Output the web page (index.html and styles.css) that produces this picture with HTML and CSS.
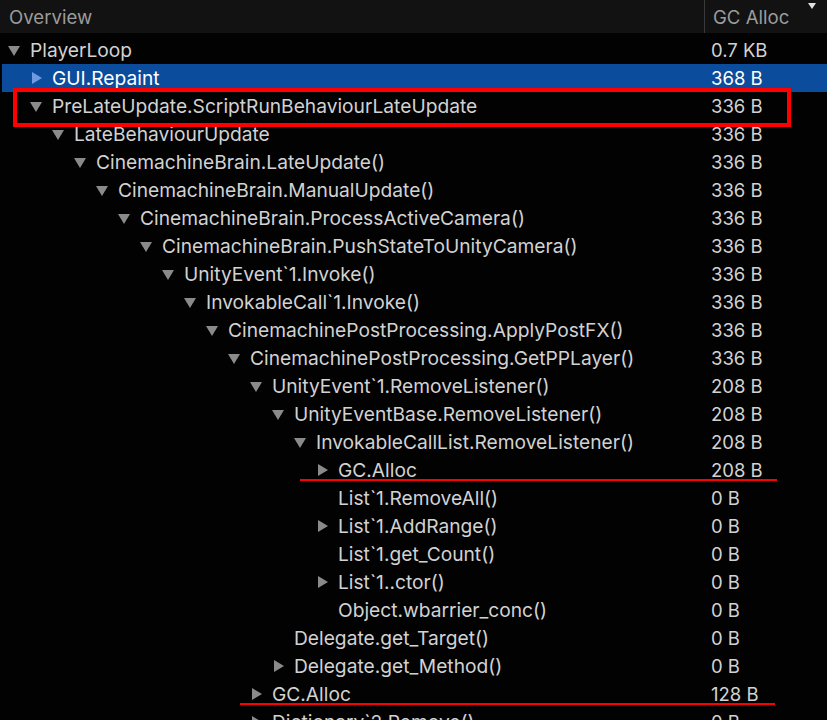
FILE: index.html
```html
<!DOCTYPE html>
<html>
<head>
<meta charset="utf-8">
<link rel="stylesheet" href="styles.css">
</head>
<body>
<div class="panel">
  <div class="header">
    <div class="hname">Overview</div>
    <div class="hval">GC Alloc</div>
    <div class="sort"></div>
  </div>
  <div class="tree">
    <div class="row"><div class="name" style="padding-left:8px"><span class="tri down"></span>PlayerLoop</div><div class="val">0.7 KB</div></div>
    <div class="row sel"><div class="name" style="padding-left:30px"><span class="tri right"></span>GUI.Repaint</div><div class="val">368 B</div></div>
    <div class="row"><div class="name" style="padding-left:30px"><span class="tri down"></span>PreLateUpdate.ScriptRunBehaviourLateUpdate</div><div class="val">336 B</div></div>
    <div class="row"><div class="name" style="padding-left:52px"><span class="tri down"></span>LateBehaviourUpdate</div><div class="val">336 B</div></div>
    <div class="row"><div class="name" style="padding-left:74px"><span class="tri down"></span>CinemachineBrain.LateUpdate()</div><div class="val">336 B</div></div>
    <div class="row"><div class="name" style="padding-left:96px"><span class="tri down"></span>CinemachineBrain.ManualUpdate()</div><div class="val">336 B</div></div>
    <div class="row"><div class="name" style="padding-left:118px"><span class="tri down"></span>CinemachineBrain.ProcessActiveCamera()</div><div class="val">336 B</div></div>
    <div class="row"><div class="name" style="padding-left:140px"><span class="tri down"></span>CinemachineBrain.PushStateToUnityCamera()</div><div class="val">336 B</div></div>
    <div class="row"><div class="name" style="padding-left:162px"><span class="tri down"></span>UnityEvent`1.Invoke()</div><div class="val">336 B</div></div>
    <div class="row"><div class="name" style="padding-left:184px"><span class="tri down"></span>InvokableCall`1.Invoke()</div><div class="val">336 B</div></div>
    <div class="row"><div class="name" style="padding-left:206px"><span class="tri down"></span>CinemachinePostProcessing.ApplyPostFX()</div><div class="val">336 B</div></div>
    <div class="row"><div class="name" style="padding-left:228px"><span class="tri down"></span>CinemachinePostProcessing.GetPPLayer()</div><div class="val">336 B</div></div>
    <div class="row"><div class="name" style="padding-left:250px"><span class="tri down"></span>UnityEvent`1.RemoveListener()</div><div class="val">208 B</div></div>
    <div class="row"><div class="name" style="padding-left:272px"><span class="tri down"></span>UnityEventBase.RemoveListener()</div><div class="val">208 B</div></div>
    <div class="row"><div class="name" style="padding-left:294px"><span class="tri down"></span>InvokableCallList.RemoveListener()</div><div class="val">208 B</div></div>
    <div class="row"><div class="name" style="padding-left:316px"><span class="tri right"></span>GC.Alloc</div><div class="val">208 B</div></div>
    <div class="row"><div class="name" style="padding-left:316px"><span class="tri none"></span>List`1.RemoveAll()</div><div class="val">0 B</div></div>
    <div class="row"><div class="name" style="padding-left:316px"><span class="tri right"></span>List`1.AddRange()</div><div class="val">0 B</div></div>
    <div class="row"><div class="name" style="padding-left:316px"><span class="tri none"></span>List`1.get_Count()</div><div class="val">0 B</div></div>
    <div class="row"><div class="name" style="padding-left:316px"><span class="tri right"></span>List`1..ctor()</div><div class="val">0 B</div></div>
    <div class="row"><div class="name" style="padding-left:316px"><span class="tri none"></span>Object.wbarrier_conc()</div><div class="val">0 B</div></div>
    <div class="row"><div class="name" style="padding-left:272px"><span class="tri none"></span>Delegate.get_Target()</div><div class="val">0 B</div></div>
    <div class="row"><div class="name" style="padding-left:272px"><span class="tri right"></span>Delegate.get_Method()</div><div class="val">0 B</div></div>
    <div class="row"><div class="name" style="padding-left:250px"><span class="tri right"></span>GC.Alloc</div><div class="val">128 B</div></div>
    <div class="row"><div class="name" style="padding-left:250px"><span class="tri right"></span>Dictionary`2.Remove()</div><div class="val">0 B</div></div>
  </div>
  <div class="mark box"></div>
  <div class="mark line1"></div>
  <div class="mark line2"></div>
</div>
</body>
</html>
```

FILE: styles.css
```css
html, body {
  margin: 0;
  padding: 0;
  background: #020202;
}
body {
  width: 827px;
  height: 720px;
  overflow: hidden;
  font-family: Inter, "Noto Sans", sans-serif;
}
.panel {
  position: relative;
  width: 827px;
  height: 720px;
  overflow: hidden;
  background: #020202;
}
.header {
  display: flex;
  height: 33px;
  background: #121212;
  color: #9c9c9c;
  font-size: 18.6px;
  align-items: center;
  position: relative;
}
.hname {
  width: 695px;
  padding-left: 9px;
  height: 100%;
  display: flex;
  align-items: center;
  border-right: 1px solid #3a3a3a;
}
.hval {
  padding-left: 8px;
}
.sort {
  position: absolute;
  right: 11px;
  top: 3px;
  width: 0;
  height: 0;
  border-left: 4px solid transparent;
  border-right: 4px solid transparent;
  border-top: 6px solid #e0e0e0;
}
.tree {
  padding-top: 3px;
}
.row {
  display: flex;
  height: 28px;
  align-items: center;
  color: #d2d2d2;
  font-size: 19.2px;
  white-space: nowrap;
}
.row.sel {
  background: #0c4c9c;
  color: #ffffff;
  margin-left: 2px;
}
.row.sel .name {
  margin-left: -2px;
}
.name {
  width: 703px;
  display: flex;
  align-items: center;
  box-sizing: border-box;
}
.val {
  padding-left: 8px;
  font-size: 18.5px;
}
.tri {
  display: inline-block;
  width: 12px;
  height: 12px;
  margin-right: 10px;
  flex: none;
  position: relative;
}
.tri.down::before {
  content: "";
  position: absolute;
  left: 0;
  top: 2px;
  border-left: 6px solid transparent;
  border-right: 6px solid transparent;
  border-top: 10px solid #8a8a8a;
}
.tri.right::before {
  content: "";
  position: absolute;
  left: 2px;
  top: 0;
  border-top: 6px solid transparent;
  border-bottom: 6px solid transparent;
  border-left: 10px solid #8a8a8a;
}
.sel .tri.right::before {
  border-left-color: #6f9be0;
}
.mark {
  position: absolute;
}
.box {
  left: 13px;
  top: 88px;
  width: 770px;
  height: 31px;
  border: 4px solid #ff0000;
}
.line1 {
  left: 300px;
  top: 479px;
  width: 477px;
  height: 2px;
  background: #ff0000;
}
.line2 {
  left: 240px;
  top: 703px;
  width: 535px;
  height: 2px;
  background: #ff0000;
}
```
